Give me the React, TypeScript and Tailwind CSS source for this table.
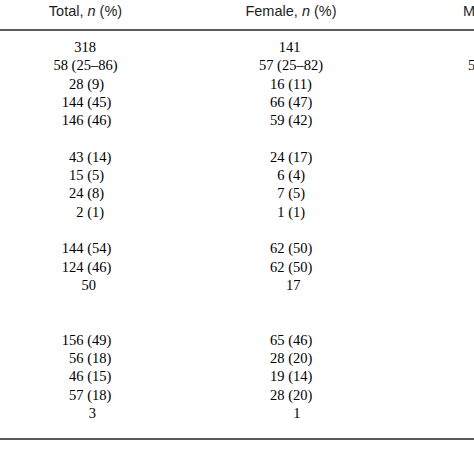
type Cell = { n: string; p?: string; range?: boolean }
type Row = [Cell, Cell, Cell] | null

const rows: Row[] = [
  [{ n: "318" }, { n: "141" }, { n: "177" }],
  [
    { n: "58 (25–86)", range: true },
    { n: "57 (25–82)", range: true },
    { n: "59 (26–86)", range: true },
  ],
  [{ n: "28", p: "(9)" }, { n: "16", p: "(11)" }, { n: "12", p: "(7)" }],
  [{ n: "144", p: "(45)" }, { n: "66", p: "(47)" }, { n: "78", p: "(44)" }],
  [{ n: "146", p: "(46)" }, { n: "59", p: "(42)" }, { n: "87", p: "(49)" }],
  null,
  [{ n: "43", p: "(14)" }, { n: "24", p: "(17)" }, { n: "19", p: "(11)" }],
  [{ n: "15", p: "(5)" }, { n: "6", p: "(4)" }, { n: "9", p: "(5)" }],
  [{ n: "24", p: "(8)" }, { n: "7", p: "(5)" }, { n: "17", p: "(10)" }],
  [{ n: "2", p: "(1)" }, { n: "1", p: "(1)" }, { n: "1", p: "(1)" }],
  null,
  [{ n: "144", p: "(54)" }, { n: "62", p: "(50)" }, { n: "82", p: "(57)" }],
  [{ n: "124", p: "(46)" }, { n: "62", p: "(50)" }, { n: "62", p: "(43)" }],
  [{ n: "50" }, { n: "17" }, { n: "33" }],
  null,
  null,
  [{ n: "156", p: "(49)" }, { n: "65", p: "(46)" }, { n: "91", p: "(52)" }],
  [{ n: "56", p: "(18)" }, { n: "28", p: "(20)" }, { n: "28", p: "(16)" }],
  [{ n: "46", p: "(15)" }, { n: "19", p: "(14)" }, { n: "27", p: "(15)" }],
  [{ n: "57", p: "(18)" }, { n: "28", p: "(20)" }, { n: "29", p: "(16)" }],
  [{ n: "3" }, { n: "1" }, { n: "2" }],
]

// column geometry: width, where the number ends, where a lone value ends
const cols = [
  { w: "w-[171px]", num: "w-[83.5px]", solo: "w-[96px]" },
  { w: "w-[240px]", num: "w-[113.5px]", solo: "w-[129.5px]" },
  { w: "w-[178px]", num: "w-[84px]", solo: "w-[96px]" },
]

function DataCell({ cell, col }: { cell: Cell; col: number }) {
  const c = cols[col]
  if (cell.range) {
    return <div className={`${c.w} shrink-0 text-center`}>{cell.n}</div>
  }
  if (!cell.p) {
    return (
      <div className={`${c.w} shrink-0 flex`}>
        <span className={`${c.solo} text-right`}>{cell.n}</span>
      </div>
    )
  }
  return (
    <div className={`${c.w} shrink-0 flex whitespace-pre`}>
      <span className={`${c.num} text-right`}>{cell.n}</span>
      <span>{" " + cell.p}</span>
    </div>
  )
}

export default function App() {
  return (
    <div className="w-[474px] h-[474px] overflow-hidden bg-white">
      <div className="w-[589px]">
        <div
          className="flex h-[29px] pt-[1px] text-[14.5px] leading-[20px] text-[#1e1e1e]"
          style={{ fontFamily: '"Liberation Sans", Arial, sans-serif' }}
        >
          <div className={`${cols[0].w} shrink-0 text-center`}>
            Total, <i>n</i> (%)
          </div>
          <div className={`${cols[1].w} shrink-0 text-center`}>
            Female, <i>n</i> (%)
          </div>
          <div className={`${cols[2].w} shrink-0 text-center`}>
            Male, <i>n</i> (%)
          </div>
        </div>
        <div className="h-[2px] bg-[#5a5a5a]" />
        <div
          className="pt-[7px] pb-[16px] text-[14.5px] leading-[18.3px] text-black"
          style={{ fontFamily: '"Liberation Serif", "Times New Roman", serif' }}
        >
          {rows.map((r, i) =>
            r ? (
              <div key={i} className="flex h-[18.3px]">
                {r.map((cell, j) => (
                  <DataCell key={j} cell={cell} col={j} />
                ))}
              </div>
            ) : (
              <div key={i} className="h-[18.3px]" />
            ),
          )}
        </div>
        <div className="h-[2px] bg-[#5a5a5a]" />
      </div>
    </div>
  )
}
